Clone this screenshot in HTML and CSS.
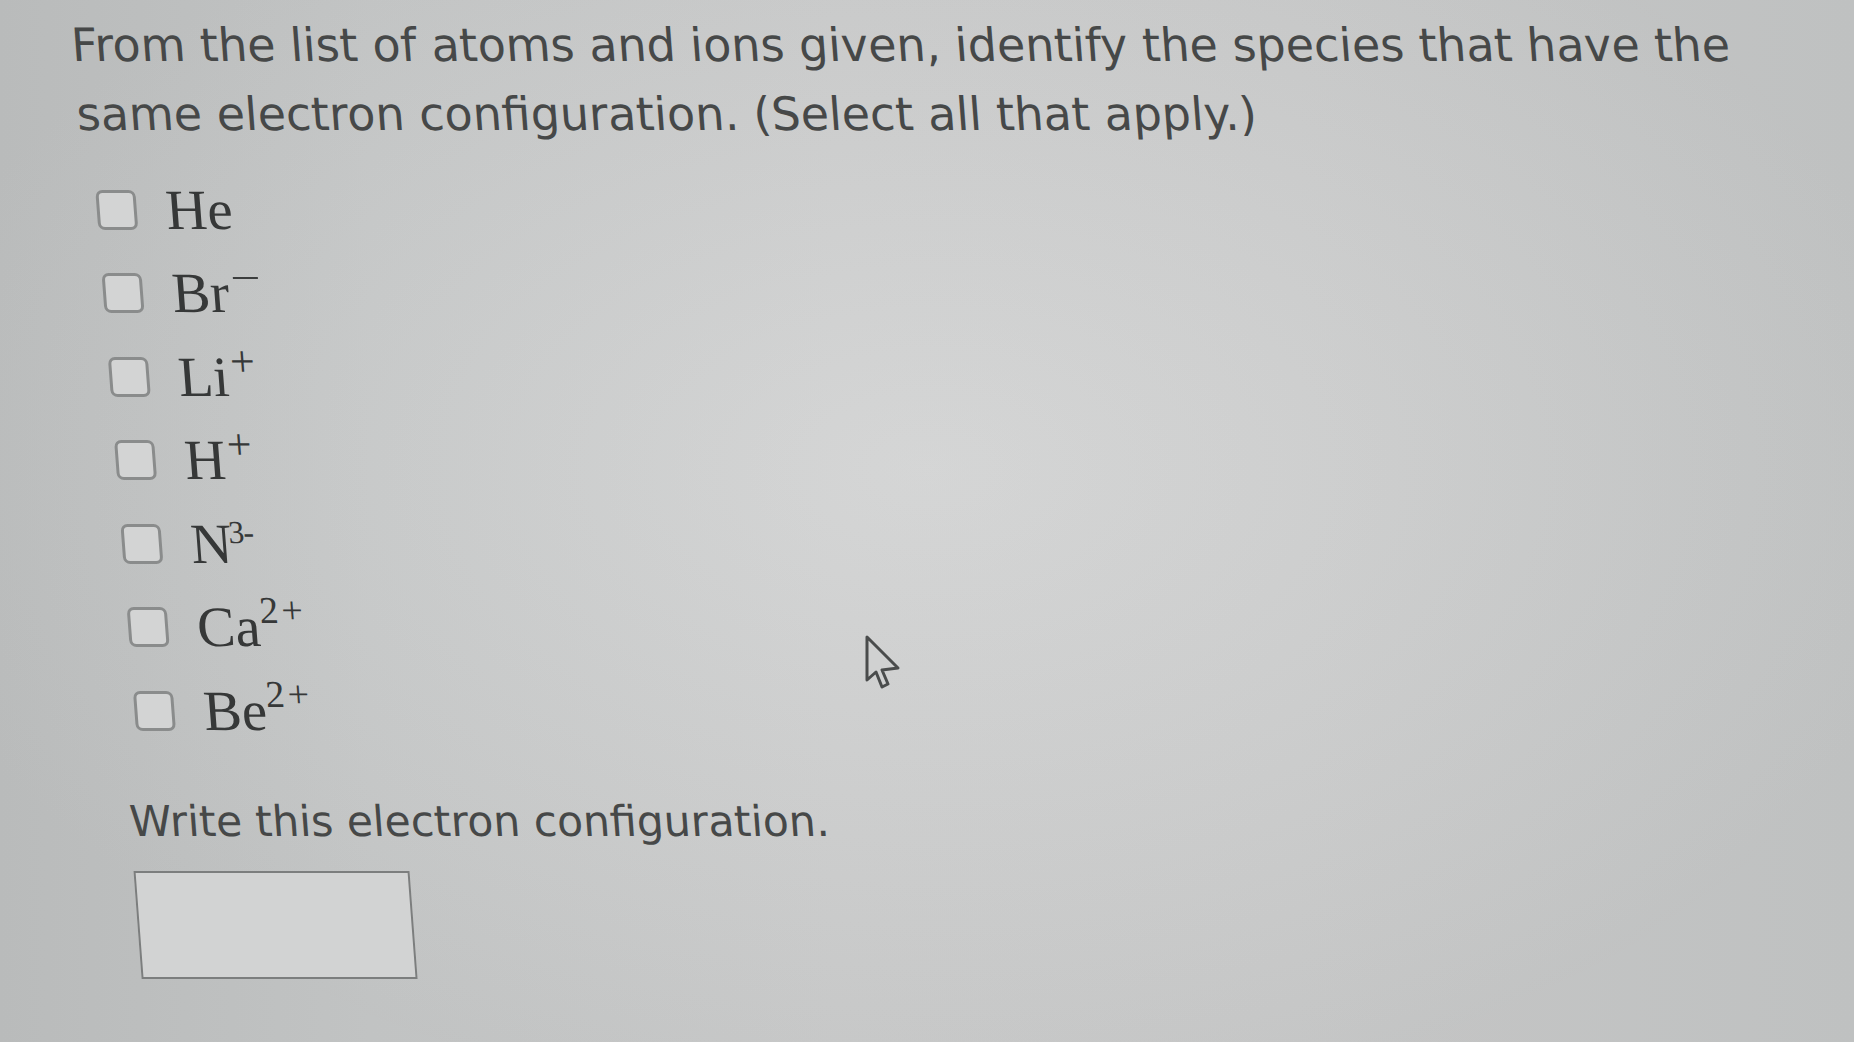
FILE: index.html
```html
<!DOCTYPE html>
<html lang="en">
<head>
<meta charset="utf-8">
<title>Electron configuration question</title>
<link rel="stylesheet" href="styles.css">
</head>
<body>
<main class="page">
  <section class="sheet">
    <p class="prompt">From the list of atoms and ions given, identify the species that have the<br>same electron configuration. (Select all that apply.)</p>
    <ul class="options">
      <li class="option"><span class="box"></span><span class="label">He</span></li>
      <li class="option"><span class="box"></span><span class="label">Br<span class="minus" aria-label="minus"></span></span></li>
      <li class="option"><span class="box"></span><span class="label">Li<sup class="plus">+</sup></span></li>
      <li class="option"><span class="box"></span><span class="label">H<sup class="plus">+</sup></span></li>
      <li class="option"><span class="box"></span><span class="label">N<sup class="small">3-</sup></span></li>
      <li class="option"><span class="box"></span><span class="label">Ca<sup class="big">2+</sup></span></li>
      <li class="option"><span class="box"></span><span class="label">Be<sup class="big">2+</sup></span></li>
    </ul>
    <p class="write">Write this electron configuration.</p>
    <div class="answer"></div>
  </section>
  <svg class="cursor" width="40" height="58" viewBox="0 0 40 58" aria-hidden="true">
    <path d="M3 3 L3 46 L12 38 L18 53 L24 50 L18 36 L34 34 Z" fill="#d0d1d1" stroke="#4a4c4c" stroke-width="3" stroke-linejoin="round"/>
  </svg>
</main>
</body>
</html>
```
FILE: styles.css
```css
html, body {
  margin: 0;
  padding: 0;
}
body {
  width: 1854px;
  height: 1042px;
  overflow: hidden;
  background: linear-gradient(90deg, #c3c5c5 0%, #cbcdcd 20%, #d0d1d1 45%, #cfd0d0 70%, #c9cbcb 100%);
}
.page {
  position: relative;
  width: 1854px;
  height: 1042px;
  background: radial-gradient(ellipse at 50% 45%, rgba(255,255,255,0.10), rgba(0,0,0,0.05) 80%);
}
.sheet {
  padding: 11px 0 0 68px;
  transform: skewX(4.3deg);
  transform-origin: 0 0;
}
.prompt {
  margin: 0;
  font-family: "DejaVu Sans", Verdana, sans-serif;
  font-size: 46px;
  line-height: 69px;
  color: #464848;
  white-space: nowrap;
}
.prompt-wide {
  letter-spacing: 0.15px;
}
.options {
  list-style: none;
  margin: 19px 0 0 13px;
  padding: 0;
}
.option {
  height: 83.5px;
  display: flex;
  align-items: center;
  gap: 29px;
}
.box {
  width: 34px;
  height: 34px;
  border: 3px solid #8a8c8c;
  border-radius: 7px;
  background: #d3d4d4;
  flex: none;
}
.label {
  font-family: "Liberation Serif", "Times New Roman", serif;
  font-size: 57px;
  line-height: 60px;
  color: #363838;
}
.label sup {
  line-height: 0;
  vertical-align: 0;
  position: relative;
}
.label .minus {
  display: inline-block;
  width: 25px;
  height: 2px;
  background: #3c3e3e;
  margin-left: 5px;
  vertical-align: 33px;
}
.label sup.plus {
  font-size: 44px;
  top: -20px;
  margin-left: 2px;
}
.label sup.small {
  font-size: 32px;
  top: -20px;
  margin-left: -3px;
  letter-spacing: -1px;
}
.label sup.big {
  font-size: 38px;
  top: -23px;
  letter-spacing: 3px;
}
.write {
  margin: 44px 0 0 0;
  font-family: "DejaVu Sans", Verdana, sans-serif;
  font-size: 42.5px;
  line-height: 50px;
  color: #464848;
  white-space: nowrap;
}
.answer {
  margin-top: 24px;
  width: 272px;
  height: 104px;
  border: 2px solid #7c7e7e;
  background: #d2d3d3;
}
.cursor {
  position: absolute;
  left: 864px;
  top: 634px;
}
```
